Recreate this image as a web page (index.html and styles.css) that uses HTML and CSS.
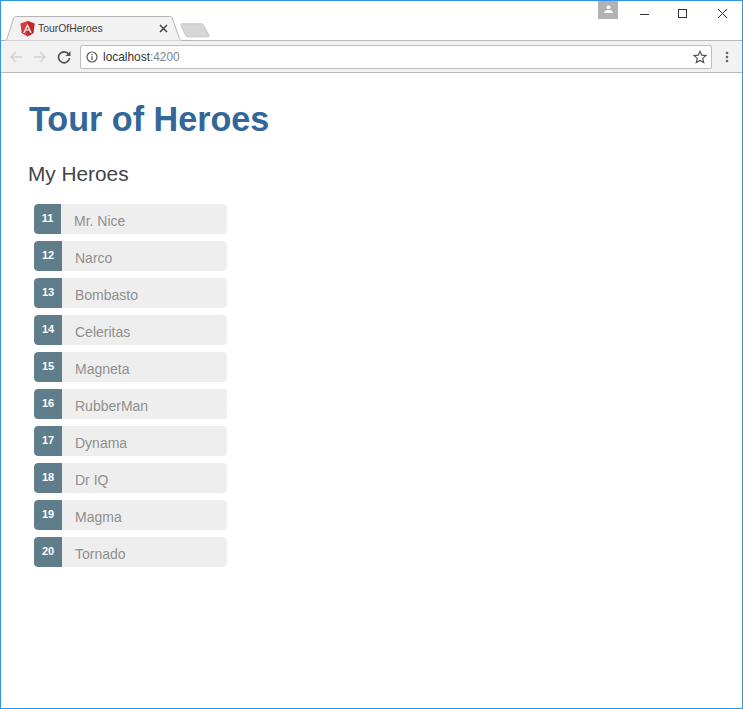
FILE: index.html
```html
<!DOCTYPE html>
<html lang="en">
<head>
<meta charset="utf-8">
<title>TourOfHeroes</title>
<link rel="stylesheet" href="styles.css">
</head>
<body>
<div class="window">
  <header class="tabstrip">
    <div class="tab">
      <svg class="tab-shape" width="186" height="25" viewBox="0 0 186 25"><path d="M0 24.500H3.500C5 24.500 5.600 23.800 6.200 22L12.500 2.800C13 1.200 13.800 .5 15.500 .5H168.500C170.200 .5 171 1.200 171.500 2.800L178 21.500C178.500 23 180 24.500 182 24.500H186" fill="#f2f2f2" stroke="#b4b4b4"/></svg>
      <svg class="favicon" width="15" height="16" viewBox="0 0 16 17"><path d="M8 0L15.500 2.700 14.300 12.800 8 16.500 1.700 12.800.5 2.700Z" fill="#dd3a3f"/><path d="M8 0L15.500 2.700 14.300 12.800 8 16.500Z" fill="#c3252d"/><path d="M8 2.800L3.500 12.500H5.200L6.100 10.200H9.900L10.800 12.500H12.500ZM8 5.800L9.300 8.900H6.700Z" fill="#fff"/></svg>
      <span class="tab-title">TourOfHeroes</span>
      <svg class="tab-close" width="9" height="9" viewBox="0 0 9 9"><path d="M1 1L8 8M8 1L1 8" stroke="#444" stroke-width="1.500"/></svg>
    </div>
    <svg class="new-tab" width="31" height="15" viewBox="0 0 32 15"><path d="M1 1.500C1 .8 1.500.5 2 .5H22C23 .5 23.500.9 24 1.700L30 12.500C30.500 13.500 30 14 29 14H8C7 14 6.500 13.600 6 12.800L1 2.500Z" fill="#d6d6d6" stroke="#c6c6c6"/></svg>
    <div class="spacer"></div>
    <div class="profile">
      <svg width="9" height="8" viewBox="0 0 10 9"><circle cx="5" cy="2.500" r="2.200" fill="#fff"/><path d="M0 9C0 6.500 2.500 5.500 5 5.500S10 6.500 10 9Z" fill="#fff"/></svg>
    </div>
    <div class="win-controls">
      <svg class="win-btn" width="40" height="26" viewBox="0 0 40 26"><path d="M16 13.500H25" stroke="#333"/></svg>
      <svg class="win-btn" width="38" height="26" viewBox="0 0 38 26"><rect x="14.500" y="8.500" width="8" height="8" fill="none" stroke="#333"/></svg>
      <svg class="win-btn" width="40" height="26" viewBox="0 0 40 26"><path d="M16 8L25 17M25 8L16 17" stroke="#333"/></svg>
    </div>
  </header>
  <div class="toolbar">
    <svg class="nav-icon" width="14" height="14" viewBox="0 0 14 14"><path d="M13 7H2M7 2L2 7l5 5" fill="none" stroke="#d2d2d2" stroke-width="1.600"/></svg>
    <svg class="nav-icon" width="14" height="14" viewBox="0 0 14 14"><path d="M1 7H12M7 2l5 5-5 5" fill="none" stroke="#d2d2d2" stroke-width="1.600"/></svg>
    <svg class="nav-icon" width="14" height="14" viewBox="0 0 14 14"><path d="M11.600 4.200A5.500 5.500 0 1 0 12.500 8" fill="none" stroke="#555" stroke-width="1.700"/><path d="M13.500 1V6H8.500Z" fill="#555"/></svg>
    <div class="omnibox">
      <svg class="info" width="12" height="12" viewBox="0 0 12 12"><circle cx="6" cy="6" r="5" fill="none" stroke="#555" stroke-width="1.200"/><path d="M6 5.200V9M6 3V4.300" stroke="#555" stroke-width="1.200"/></svg>
      <span class="url">localhost<span class="port">:4200</span></span>
      <svg class="star" width="14" height="14" viewBox="0 0 14 14"><path d="M7 1.300L8.700 5.200 12.900 5.600 9.700 8.400 10.700 12.600 7 10.400 3.300 12.600 4.300 8.400 1.100 5.600 5.300 5.200Z" fill="none" stroke="#555" stroke-width="1.200"/></svg>
    </div>
    <svg class="menu" width="4" height="12" viewBox="0 0 4 12"><circle cx="2" cy="2" r="1.300" fill="#666"/><circle cx="2" cy="6" r="1.300" fill="#666"/><circle cx="2" cy="10" r="1.300" fill="#666"/></svg>
  </div>
  <main class="page">
    <h1 class="title">Tour of Heroes</h1>
    <h2 class="subtitle">My Heroes</h2>
    <ul class="heroes">
      <li class="hero hero-first"><span class="badge">11</span><span class="name">Mr. Nice</span></li>
      <li class="hero"><span class="badge">12</span><span class="name">Narco</span></li>
      <li class="hero"><span class="badge">13</span><span class="name">Bombasto</span></li>
      <li class="hero"><span class="badge">14</span><span class="name">Celeritas</span></li>
      <li class="hero"><span class="badge">15</span><span class="name">Magneta</span></li>
      <li class="hero"><span class="badge">16</span><span class="name">RubberMan</span></li>
      <li class="hero"><span class="badge">17</span><span class="name">Dynama</span></li>
      <li class="hero"><span class="badge">18</span><span class="name">Dr IQ</span></li>
      <li class="hero"><span class="badge">19</span><span class="name">Magma</span></li>
      <li class="hero"><span class="badge">20</span><span class="name">Tornado</span></li>
    </ul>
  </main>
</div>
</body>
</html>
```
FILE: styles.css
```css
* { box-sizing: border-box; }
html, body { margin: 0; height: 100%; }
body { font-family: "Liberation Sans", Arial, sans-serif; background: #fff; overflow: hidden; }
.window { height: 709px; border: 1px solid #2f97e6; display: flex; flex-direction: column; }
.tabstrip { height: 40px; display: flex; align-items: flex-start; border-bottom: 1px solid #b9b9b9; flex: none; }
.tab { position: relative; width: 179px; height: 40px; padding: 16px 0 0 19px; display: flex; align-items: center; }
.tab-shape { position: absolute; left: 0; top: 15px; }
.favicon { position: relative; margin-top: -1px; }
.tab-title { position: relative; margin-left: 3px; margin-top: -1px; font-size: 10.400px; color: #3c3c3c; width: 121px; }
.tab-close { position: relative; margin-top: -1px; }
.new-tab { margin-top: 22px; }
.spacer { flex: 1; }
.profile { width: 20px; height: 18px; background: #b2b2b2; display: flex; align-items: center; justify-content: center; padding-bottom: 3px; }
.win-controls { display: flex; margin-left: 6px; }
.win-btn { display: block; }
.toolbar { height: 32px; background: #f2f2f2; border-bottom: 1px solid #b9b9b9; display: flex; align-items: center; padding: 1px 11px 0 8px; gap: 10px; flex: none; }
.omnibox { flex: 1; height: 24px; margin-left: -1px; background: #fff; border: 1px solid #bdbdbd; border-radius: 2px; display: flex; align-items: center; padding: 0 4px 0 5px; }
.info { flex: none; }
.url { margin-left: 5px; flex: 1; font-size: 11.900px; color: #333; }
.port { color: #80868b; }
.menu { margin: 0 2px 0 3px; }
.page { flex: 1; padding: 23px 0 0 28px; }
.title { margin: 0; font-size: 34.150px; line-height: 46px; font-weight: 700; color: #369; }
.subtitle { margin: 19px 0 0 -1px; font-size: 20.800px; line-height: 26px; font-weight: 400; color: #444; }
.heroes { list-style: none; margin: 17px 0 0 5px; padding: 0; width: 193px; display: flex; flex-direction: column; gap: 7px; }
.hero { height: 30px; background: #eee; border-radius: 4px; display: flex; overflow: hidden; }
.badge { width: 28px; height: 30px; background: #607d8b; color: #fff; font-size: 11px; font-weight: 700; display: flex; align-items: center; justify-content: center; padding-bottom: 2px; border-radius: 4px 0 0 4px; }
.hero-first .badge { width: 27px; }
.name { margin-left: 13px; padding-top: 9px; font-size: 14px; line-height: 16px; color: #8f8f8f; }
```
